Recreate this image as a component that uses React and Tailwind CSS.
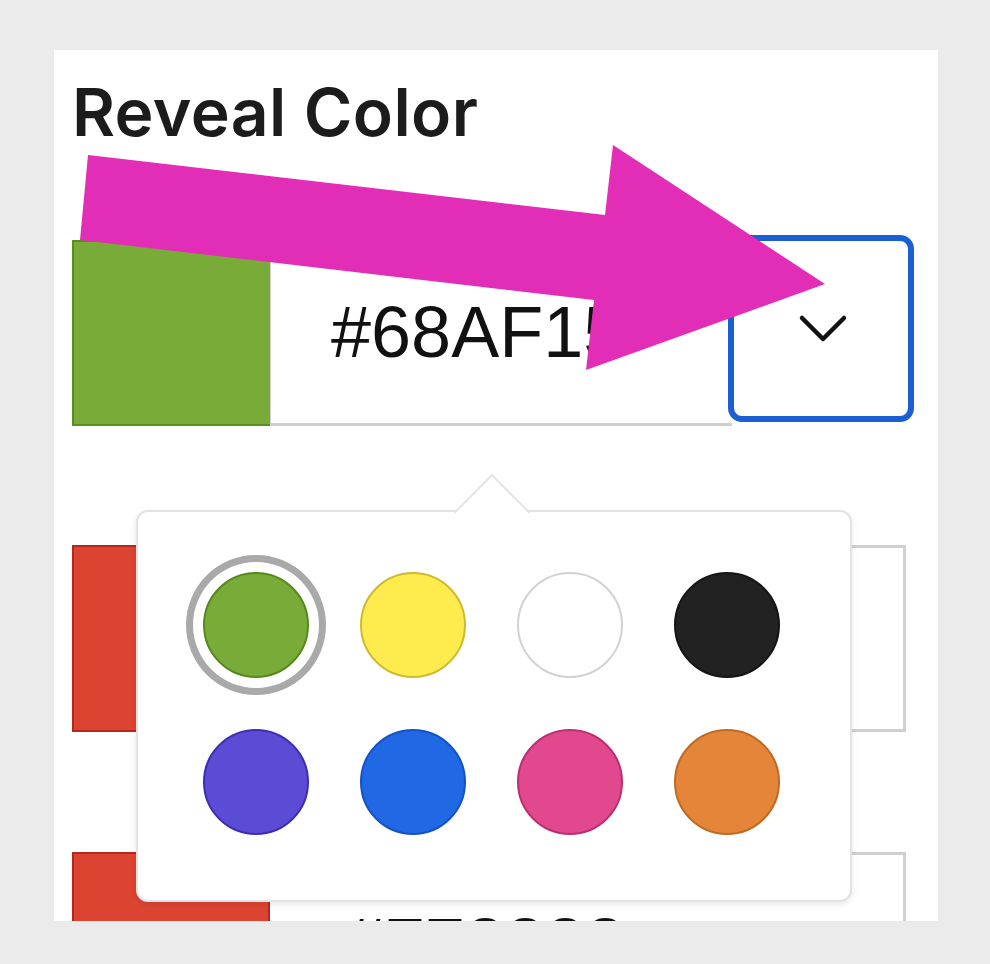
import React from "react";

const swatches = [
  { bg: "bg-[#79ab39]", border: "border-[#55891c]", selected: true },
  { bg: "bg-[#feeb4e]", border: "border-[#cfba2f]" },
  { bg: "bg-white", border: "border-[#d2d2d2]" },
  { bg: "bg-[#222222]", border: "border-[#151515]" },
  { bg: "bg-[#5c4bd4]", border: "border-[#3e2db3]" },
  { bg: "bg-[#2068e4]", border: "border-[#1552c6]" },
  { bg: "bg-[#e2488e]", border: "border-[#bb2f70]" },
  { bg: "bg-[#e5853a]", border: "border-[#bf6a22]" },
];

function Chevron() {
  return (
    <svg width="50" height="30" viewBox="0 0 50 30" className="ml-[3px]">
      <polyline
        points="4,4 25,25 46,4"
        fill="none"
        stroke="#111"
        strokeWidth="4.5"
        strokeLinecap="round"
        strokeLinejoin="round"
      />
    </svg>
  );
}

function HexRow({ text, top }) {
  return (
    <div className={`flex h-[187px] ${top}`}>
      <div className="w-[198px] h-full bg-[#dc4431] border-2 border-[#b5291c]" />
      <div className="w-[636px] h-full border-[3px] border-l-0 border-[#d0d0d0] flex items-center pl-[75px] pb-[3px]">
        <span className="text-[72px] text-[#111] font-['Liberation_Sans',Arial,sans-serif]">{text}</span>
      </div>
    </div>
  );
}

export default function App() {
  return (
    <div className="relative w-[990px] h-[964px] bg-[#ebebeb] pt-[50px] pl-[54px] overflow-hidden">
      <div className="relative w-[884px] h-[871px] bg-white pl-[18px] pt-[29px] overflow-hidden">
        <h1 className="text-[66px] leading-[66px] font-semibold text-[#1c1c1c] tracking-[0.4px] font-['Inter','Liberation_Sans',sans-serif]">
          Reveal Color
        </h1>

        <div className="flex h-[186px] mt-[95px]">
          <div className="w-[198px] h-full bg-[#79ab39] border-2 border-r-0 border-[#5a8f1f]" />
          <div className="w-[462px] h-full border-b-[3px] border-l border-[#cfcfcf] flex items-center pl-[60px]">
            <span className="text-[72px] text-[#111] font-['Liberation_Sans',Arial,sans-serif]">#68AF15</span>
          </div>
          <button className="-ml-[4px] -mt-[5px] w-[186px] h-[187px] border-[6px] border-[#1b60d2] rounded-[14px] bg-white flex items-center justify-center">
            <Chevron />
          </button>
        </div>

        <HexRow text="#553333" top="mt-[119px]" />
        <HexRow text="#773333" top="mt-[120px]" />

        {/* Popover */}
        <div className="absolute left-[82px] top-[460px] w-[716px] h-[392px] bg-white border-2 border-[#e3e3e3] rounded-[12px] shadow-[0_2px_6px_rgba(0,0,0,0.10)]">
          <div className="absolute left-[327px] top-[-27px] w-[54px] h-[54px] bg-white border-t-2 border-l-2 border-[#e3e3e3] rotate-45" />
          <div className="relative grid grid-cols-[repeat(4,106px)] gap-[51px] pl-[65px] pt-[60px]">
            {swatches.map((s, i) => (
              <div
                key={i}
                className={`w-[106px] h-[106px] rounded-full border-2 ${s.bg} ${s.border} ${
                  s.selected ? "ring-[7px] ring-[#a9a9a9] ring-offset-[10px] ring-offset-white" : ""
                }`}
              />
            ))}
          </div>
        </div>
      </div>

      {/* Annotation arrow */}
      <svg
        className="absolute left-0 top-0 pointer-events-none"
        width="990"
        height="964"
        viewBox="0 0 990 964"
      >
        <polygon
          points="88,155 605,215 613,145 825,284 586,370 594,300 80,240"
          fill="#e22eb6"
        />
      </svg>
    </div>
  );
}
